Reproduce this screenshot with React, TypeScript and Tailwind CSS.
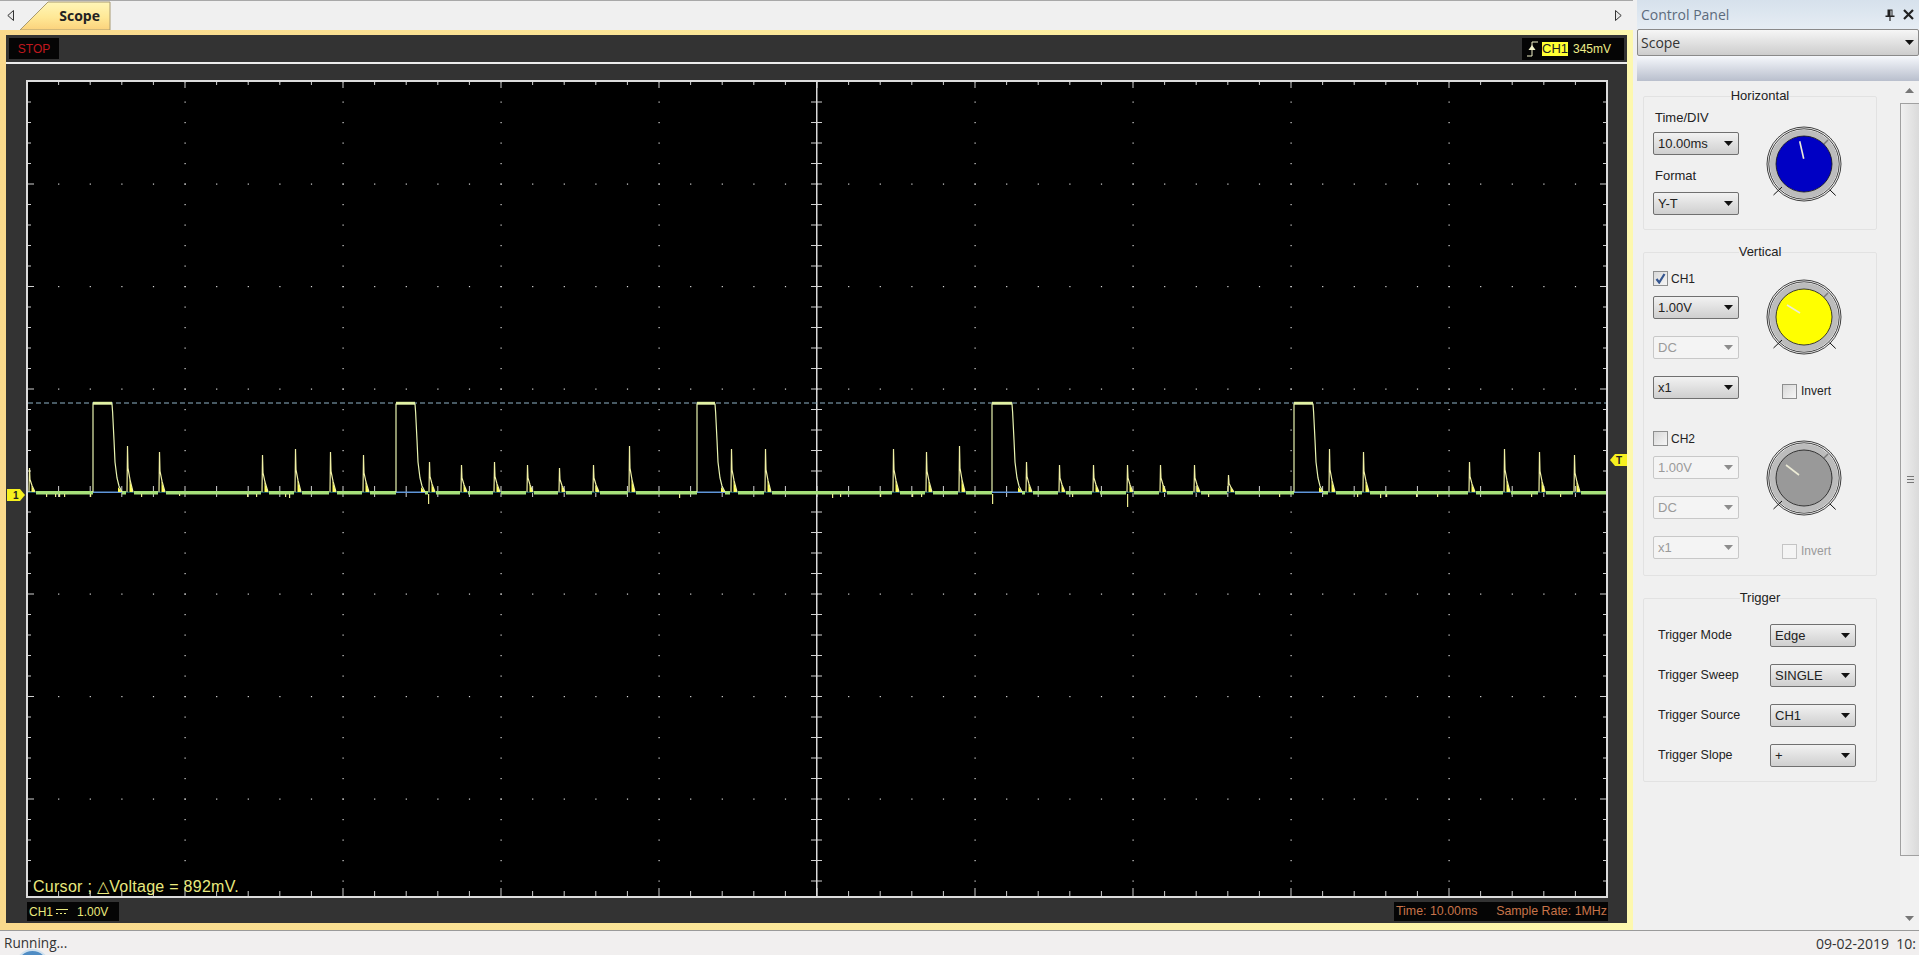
import React from "react";

const SANS = "font-['Liberation_Sans',Arial,sans-serif]";

// scope grid, in page pixels (the svg viewBox starts at the plot corner)
const xTicks = Array.from({ length: 49 }, (_, i) => i - 24);
const yTicks = Array.from({ length: 40 }, (_, i) => i - 19);
const gx = (k: number) => 816.5 + 31.6 * k;
const gy = (k: number) => 491 - 20.5 * k;

const pulses: [number, number][] = [
  [93, 112],
  [396, 415],
  [697, 715],
  [992, 1012],
  [1294, 1313],
];

const spikes: [number, number][] = [
  [29, 468], [127, 446], [159, 452], [262, 455], [295, 449], [330, 452], [363, 455],
  [429, 462], [461, 465], [494, 462], [527, 465], [559, 468], [593, 465], [629, 446],
  [731, 449], [765, 449], [893, 449], [926, 452], [959, 446], [1026, 462], [1059, 465],
  [1093, 465], [1127, 465], [1160, 465], [1194, 465], [1228, 475], [1329, 449], [1363, 452],
  [1469, 462], [1504, 449], [1539, 452], [1574, 455],
];

const glitches: [number, number][] = [
  [46, 497], [55, 497], [59, 497], [64, 497], [90, 497], [141, 497], [179, 496], [247, 497],
  [256, 497], [285, 497], [289, 498], [428, 504], [679, 498], [832, 498], [840, 497], [880, 497],
  [912, 497], [921, 497], [992, 504], [1127, 507], [1072, 497], [1208, 497], [1279, 497], [1357, 497],
  [1380, 498], [1386, 497], [1416, 497], [1437, 497], [1531, 497], [1560, 497],
];

function greenSegments() {
  const gaps = [
    ...pulses.map(([a, b]) => [a, b + 10]),
    ...spikes.map(([x]) => [x - 1, x + 7]),
  ].sort((p, q) => p[0] - q[0]);
  const out: [number, number][] = [];
  let from = 28;
  for (const [a, b] of gaps) {
    if (a > from) out.push([from, a]);
    from = Math.max(from, b);
  }
  out.push([from, 1606]);
  return out;
}

function ScopeCanvas() {
  return (
    <svg viewBox="28 82 1578 814" className="block h-[814px] w-[1578px]">
      {/* edge ticks */}
      {xTicks.map((k) => (
        <g key={k} fill="#cfcfcf">
          <rect x={gx(k)} y={82} width={1} height={k % 5 === 0 ? 6 : 3} />
          <rect x={gx(k)} y={k % 5 === 0 ? 888 : 891} width={1} height={k % 5 === 0 ? 8 : 5} />
          <rect x={gx(k)} y={486} width={1} height={11} />
        </g>
      ))}
      {yTicks.map((k) => (
        <g key={k} fill="#cfcfcf">
          <rect x={28} y={gy(k)} width={k % 5 === 0 ? 6 : 3} height={1} />
          <rect x={k % 5 === 0 ? 1600 : 1603} y={gy(k)} width={k % 5 === 0 ? 6 : 3} height={1} />
          <rect x={811} y={gy(k)} width={11} height={1} />
        </g>
      ))}
      {/* dotted divisions */}
      {xTicks
        .filter((k) => k % 5 === 0 && k !== 0)
        .map((k) =>
          yTicks.map((j) => (
            <rect key={`${k}-${j}`} x={gx(k)} y={gy(j)} width={1.2} height={1.2} fill="#d8d8d8" />
          ))
        )}
      {yTicks
        .filter((j) => j % 5 === 0 && j !== 0)
        .map((j) =>
          xTicks.map((k) => (
            <rect key={`r${k}-${j}`} x={gx(k)} y={gy(j)} width={1.2} height={1.2} fill="#d8d8d8" />
          ))
        )}
      <rect x={816} y={82} width={1.5} height={814} fill="#d8d8d8" />

      {/* trigger level */}
      <line x1={28} x2={1606} y1={403} y2={403} stroke="#8fb3c7" strokeWidth={1} strokeDasharray="5 3" />

      {/* trace */}
      {pulses.map(([a, b]) => (
        <rect key={a} x={a} y={491.5} width={b + 10 - a} height={1.5} fill="#5f95d8" />
      ))}
      {spikes.map(([x]) => (
        <rect key={x} x={x - 1} y={491.5} width={8} height={1.5} fill="#17525a" />
      ))}
      {greenSegments().map(([a, b]) => (
        <rect key={a} x={a} y={491} width={b - a} height={3.5} fill="#a6e07a" />
      ))}
      {glitches.map(([x, y]) => (
        <rect key={x} x={x} y={494} width={1.2} height={y - 494} fill="#ecec90" />
      ))}
      {pulses.map(([a, b]) => (
        <g key={a} fill="none">
          <path d={`M${b + 6} 487 L${b + 10} 492 L${b + 6} 492 Z`} fill="#ffff55" stroke="none" />
          <rect x={a} y={401.8} width={b - a} height={2.6} fill="#dff0a0" />
          <path
            d={`M${a} 492 L${a} 404 L${b} 404 L${b + 0.6} 412 L${b + 2} 440 L${b + 3} 462 L${b + 5} 478 L${b + 7} 486 L${b + 10} 492`}
            stroke="#e8f4b0"
            strokeWidth={1.2}
          />
        </g>
      ))}
      {spikes.map(([x, top]) => {
        const h = 492 - top;
        return (
          <g key={x}>
            <path
              d={`M${x + 2.5} ${492 - h * 0.28} L${x + 6} 492 L${x + 2.5} 492 Z`}
              fill="#ffff55"
            />
            <path
              d={`M${x} 492 L${x + 0.5} ${top} L${x + 1} ${492 - h * 0.52} L${x + 3} ${492 - h * 0.27} L${x + 6} 492`}
              fill="none"
              stroke="#f0f0a4"
              strokeWidth={1.2}
            />
          </g>
        );
      })}
    </svg>
  );
}

function Arrow({ disabled }: { disabled?: boolean }) {
  return (
    <svg width="9" height="5" viewBox="0 0 9 5" className="block">
      <path d="M0 0H9L4.5 5Z" fill={disabled ? "#8c8c8c" : "#111"} />
    </svg>
  );
}

function Select({
  value,
  disabled,
  className = "",
}: {
  value: string;
  disabled?: boolean;
  className?: string;
}) {
  return (
    <div
      className={`flex h-[23px] w-[86px] items-center justify-between rounded-[2px] border pl-[4px] pr-[5px] text-[13px] ${
        disabled
          ? "border-[#c8c8c8] bg-[#f4f4f4] text-[#9a9a9a]"
          : "border-[#707070] bg-gradient-to-b from-[#f2f2f2] to-[#cfcfcf] text-[#222]"
      } ${className}`}
    >
      <span>{value}</span>
      <Arrow disabled={disabled} />
    </div>
  );
}

function CheckBox({ checked, disabled }: { checked?: boolean; disabled?: boolean }) {
  return (
    <span
      className={`flex h-[15px] w-[15px] items-center justify-center border ${
        disabled
          ? "border-[#c4c4c4] bg-[#f4f4f4]"
          : "border-[#8e8f8f] bg-gradient-to-br from-[#d8d8d8] to-[#f6f6f6]"
      }`}
    >
      {checked && (
        <svg width="11" height="11" viewBox="0 0 11 11">
          <path d="M1.5 6 L4.2 9.5 L9.5 1" fill="none" stroke="#34558f" strokeWidth="2.2" />
        </svg>
      )}
    </span>
  );
}

function Knob({
  color,
  pointer,
  className = "",
}: {
  color: string;
  pointer: [number, number, number, number];
  className?: string;
}) {
  return (
    <svg width="84" height="84" viewBox="-42 -42 84 84" className={`block ${className}`}>
      <circle r="37" fill="none" stroke="#111" strokeWidth="0.8" />
      <circle r="35.2" fill="none" stroke="#111" strokeWidth="0.8" />
      <circle r="31" fill="none" stroke="#bcbcbc" strokeWidth="6.4" />
      <line x1="-22" y1="23" x2="-30.5" y2="31" stroke="#111" strokeWidth="1" />
      <line x1="25.7" y1="25.7" x2="31.7" y2="31.5" stroke="#111" strokeWidth="1" />
      <line x1="20" y1="-20" x2="24" y2="-24" stroke="#777" strokeWidth="1.4" />
      <circle r="28" fill={color} stroke="#111" strokeWidth="0.8" />
      <line
        x1={pointer[0]}
        y1={pointer[1]}
        x2={pointer[2]}
        y2={pointer[3]}
        stroke="#ecebd6"
        strokeWidth="1.6"
      />
    </svg>
  );
}

function Group({
  title,
  className,
  children,
}: {
  title: string;
  className: string;
  children: React.ReactNode;
}) {
  return (
    <fieldset className={`w-[234px] rounded-[2px] border border-[#e2e2e2] ${className}`}>
      <legend className="mx-auto h-4 px-0 text-[13px] leading-4 text-[#222]">{title}</legend>
      {children}
    </fieldset>
  );
}

function Channel({
  name,
  enabled,
  color,
  pointer,
  className = "",
}: {
  name: string;
  enabled?: boolean;
  color: string;
  pointer: [number, number, number, number];
  className?: string;
}) {
  return (
    <div className={`flex gap-[23px] pl-[9px] ${className}`}>
      <div className="flex w-[86px] flex-col">
        <label className="flex h-[15px] items-center gap-[3px] text-[12px] text-[#222]">
          <CheckBox checked={enabled} />
          {name}
        </label>
        <Select value="1.00V" disabled={!enabled} className="mt-[10px]" />
        <Select value="DC" disabled className="mt-[17px]" />
        <Select value="x1" disabled={!enabled} className="mt-[17px]" />
      </div>
      <div className={`flex flex-col ${enabled ? "pt-[4px]" : "pt-[5px]"}`}>
        <Knob color={color} pointer={pointer} />
        <label
          className={`ml-[20px] flex items-center gap-[4px] text-[12px] ${
            enabled ? "mt-[23px] text-[#222]" : "mt-[22px] text-[#9a9a9a]"
          }`}
        >
          <CheckBox disabled={!enabled} />
          Invert
        </label>
      </div>
    </div>
  );
}

function ControlPanel() {
  return (
    <div className="flex min-w-0 flex-1 flex-col pl-[4px]">
      <div className="flex h-[29px] shrink-0 items-center justify-between bg-gradient-to-b from-[#d6e1ec] to-[#e6edf4] pl-[4px] pr-[5px]">
        <span className="font-['Open_Sans',sans-serif] text-[14px] text-[#5c6b7c]">Control Panel</span>
        <span className="flex items-center gap-[8px]">
          <svg width="10" height="12" viewBox="0 0 10 12">
            <path d="M2.5 0.5H7.5V6.5H9.5V8H0.5V6.5H2.5Z M4.4 8H5.6V12H4.4Z" fill="#222" />
            <rect x="5.5" y="1.5" width="1" height="5" fill="#e6edf4" />
          </svg>
          <svg width="11" height="11" viewBox="0 0 11 11">
            <path d="M1 1L10 10M10 1L1 10" stroke="#222" strokeWidth="2.2" />
          </svg>
        </span>
      </div>
      <div className="flex h-[27px] shrink-0 items-center justify-between rounded-[2px] border border-[#8a8a8a] bg-gradient-to-b from-[#f6f6f6] to-[#cdcdcd] pl-[3px] pr-[4px] font-['Open_Sans',sans-serif] text-[14px] text-[#333]">
        <span>Scope</span>
        <Arrow />
      </div>
      <div className="h-[25px] shrink-0 bg-gradient-to-b from-[#f6f8fc] to-[#b9bfcd]" />
      <div className="flex min-h-0 flex-1 bg-[#f0f0f0]">
        <div className="flex-1 pl-[6px] pt-[7px]">
          <Group title="Horizontal" className="h-[142px]">
            <div className="flex gap-[23px] pl-[9px]">
              <div className="flex w-[86px] flex-col pt-[6px]">
                <span className="pl-[2px] text-[13px] leading-4 text-[#222]">Time/DIV</span>
                <Select value="10.00ms" className="mt-[6px]" />
                <span className="mt-[13px] pl-[2px] text-[13px] leading-4 text-[#222]">Format</span>
                <Select value="Y-T" className="mt-[8px]" />
              </div>
              <Knob color="#0000c4" pointer={[-4.3, -22.7, -0.3, -5.3]} className="mt-[18px]" />
            </div>
          </Group>
          <Group title="Vertical" className="mt-[14px] h-[332px]">
            <Channel name="CH1" enabled color="#ffff00" pointer={[-17, -12, -4, -4]} className="pt-[11px]" />
            <Channel name="CH2" color="#999999" pointer={[-18, -13, -5, -3]} className="pt-[31px]" />
          </Group>
          <Group title="Trigger" className="mt-[14px] h-[192px]">
            <div className="grid grid-cols-[112px_86px] gap-y-[17px] pl-[14px] pt-[18px] text-[12.5px] text-[#222]">
              <span className="self-center">Trigger Mode</span>
              <Select value="Edge" />
              <span className="self-center">Trigger Sweep</span>
              <Select value="SINGLE" />
              <span className="self-center">Trigger Source</span>
              <Select value="CH1" />
              <span className="self-center">Trigger Slope</span>
              <Select value="+" />
            </div>
          </Group>
        </div>
        {/* scrollbar, its thumb runs off the right edge */}
        <div className="flex w-[19px] shrink-0 flex-col items-center bg-[#f1f1f1]">
          <svg width="9" height="5" viewBox="0 0 9 5" className="mt-[7px]">
            <path d="M0 5H9L4.5 0Z" fill="#777" />
          </svg>
          <div className="mt-[10px] flex h-[753px] w-full items-center justify-center border-y border-l border-[#a0a0a0] bg-gradient-to-r from-[#f0f0f0] to-[#dadada]">
            <div className="flex flex-col gap-[2px]">
              <div className="h-px w-[7px] bg-[#777]" />
              <div className="h-px w-[7px] bg-[#777]" />
              <div className="h-px w-[7px] bg-[#777]" />
            </div>
          </div>
          <svg width="9" height="5" viewBox="0 0 9 5" className="mt-[60px]">
            <path d="M0 0H9L4.5 5Z" fill="#777" />
          </svg>
        </div>
      </div>
    </div>
  );
}

function ScopeFrame() {
  return (
    <div className="flex w-[1633px] shrink-0 flex-col">
      <div className="flex h-[30px] shrink-0 items-center justify-between border-t border-[#a8a8a8] bg-[#f0f0f0] pl-[7px] pr-[11px]">
        <div className="flex items-center">
          <svg width="7" height="11" viewBox="0 0 7 11">
            <path d="M6.5 0.5V10.5L0.8 5.5Z" fill="#e8e8e8" stroke="#333" />
          </svg>
          <div className="relative ml-[6px] flex h-[29px] w-[91px] items-center justify-end pr-[11px]">
            <svg viewBox="0 0 91 29" className="absolute inset-0 h-[29px] w-[91px]">
              <defs>
                <linearGradient id="tabFill" x1="0" y1="0" x2="0" y2="1">
                  <stop offset="0" stopColor="#fff6b8" />
                  <stop offset="0.55" stopColor="#ffe896" />
                  <stop offset="1" stopColor="#fbd27c" />
                </linearGradient>
              </defs>
              <path d="M0 29L28 1H90V29Z" fill="url(#tabFill)" stroke="#a89a72" strokeWidth="1" />
            </svg>
            <span className="relative font-['Open_Sans',sans-serif] text-[14px] font-bold text-[#222]">Scope</span>
          </div>
        </div>
        <svg width="7" height="11" viewBox="0 0 7 11">
          <path d="M0.5 0.5V10.5L6.2 5.5Z" fill="#e8e8e8" stroke="#333" />
        </svg>
      </div>

      <div className="flex min-h-0 flex-1 flex-col bg-gradient-to-r from-[#f9d98c] via-[#fbe89a] to-[#fdf8ae] pb-[7px] pl-[6px] pr-[6px] pt-[5px]">
        <div className="flex flex-1 flex-col bg-[#333333]">
          <div className="flex h-[27px] shrink-0 items-start justify-between pl-[3px] pr-[3px] pt-[3px]">
            <div className="flex h-[21px] w-[50px] items-center justify-center bg-[#050505] text-[12px] text-[#c0181e]">
              STOP
            </div>
            <div className="flex h-[22px] w-[102px] items-center bg-[#050505] pl-[4px] text-[#eded8a]">
              <svg width="14" height="20" viewBox="0 0 14 20">
                <path d="M1 17H6V3H12" fill="none" stroke="#f2f2c8" strokeWidth="1" />
                <path d="M2.5 11H9.5L6 6Z" fill="#f2f2c8" />
              </svg>
              <span className="ml-[2px] bg-[#ffff33] text-[13px] leading-[14px] text-[#222]">CH1</span>
              <span className="ml-[5px] text-[12px]">345mV</span>
            </div>
          </div>
          <div className="h-[2px] shrink-0 bg-[#ececec]" />
          <div className="relative flex-1">
            <div className="relative ml-[20px] mt-[16px] w-[1582px] border-2 border-[#dcdcdc] bg-black">
              <ScopeCanvas />
              <span className="absolute bottom-[-3px] left-[5px] text-[16px] tracking-[0.28px] text-[#e9e97e]">
                Cursor ; △Voltage = 892mV.
              </span>
            </div>
            {/* channel and trigger level markers */}
            <svg width="19" height="12" viewBox="0 0 19 12" className="absolute left-[1px] top-[425px]">
              <path d="M0 0H13L18 6L13 12H0Z" fill="#f6f01e" />
              <text x="6" y="10" fontSize="10" fontWeight="700" fill="#222">1</text>
            </svg>
            <svg width="17" height="12" viewBox="0 0 17 12" className="absolute left-[1604px] top-[390px]">
              <path d="M17 0H5L0 6L5 12H17Z" fill="#f6f01e" />
              <text x="6" y="10" fontSize="10" fontWeight="700" fill="#222">T</text>
            </svg>
          </div>
          <div className="flex h-[25px] shrink-0 items-start justify-between pl-[21px] pr-[19px] pt-[4px] text-[12px]">
            <div className="flex h-[19px] w-[92px] items-center bg-[#050505] pl-[2px] text-[#e9e97e]">
              <span>CH1</span>
              <svg width="12" height="7" viewBox="0 0 12 7" className="ml-[3px]">
                <path d="M0 1.5H12M0 5.5H2M4 5.5H6M8 5.5H10" stroke="#e9e97e" strokeWidth="1" />
              </svg>
              <span className="ml-[9px]">1.00V</span>
            </div>
            <div className="flex h-[19px] w-[214px] items-center justify-between bg-[#050505] pl-[2px] pr-px text-[12.4px] text-[#c8744a]">
              <span>Time: 10.00ms</span>
              <span>Sample Rate: 1MHz</span>
            </div>
          </div>
        </div>
      </div>
    </div>
  );
}

export default function App() {
  return (
    <div className={`flex h-[955px] w-[1919px] flex-col overflow-hidden bg-[#f0f0f0] ${SANS}`}>
      <div className="flex h-[930px] shrink-0">
        <ScopeFrame />
        <ControlPanel />
      </div>
      <div className="relative flex min-h-0 flex-1 items-center justify-between overflow-hidden border-t border-[#9a9a9a] bg-[#f1efef] pl-[4px] pr-0 font-['Open_Sans',sans-serif] text-[13.6px] text-[#333]">
        <span>Running...</span>
        <span className="w-[103px] whitespace-pre text-[14px]">09-02-2019  10:</span>
        <div className="absolute left-[15px] top-[18px] h-[35px] w-[35px] rounded-full border-2 border-[#cfe0ee] bg-[#4f8cc4]" />
      </div>
    </div>
  );
}
